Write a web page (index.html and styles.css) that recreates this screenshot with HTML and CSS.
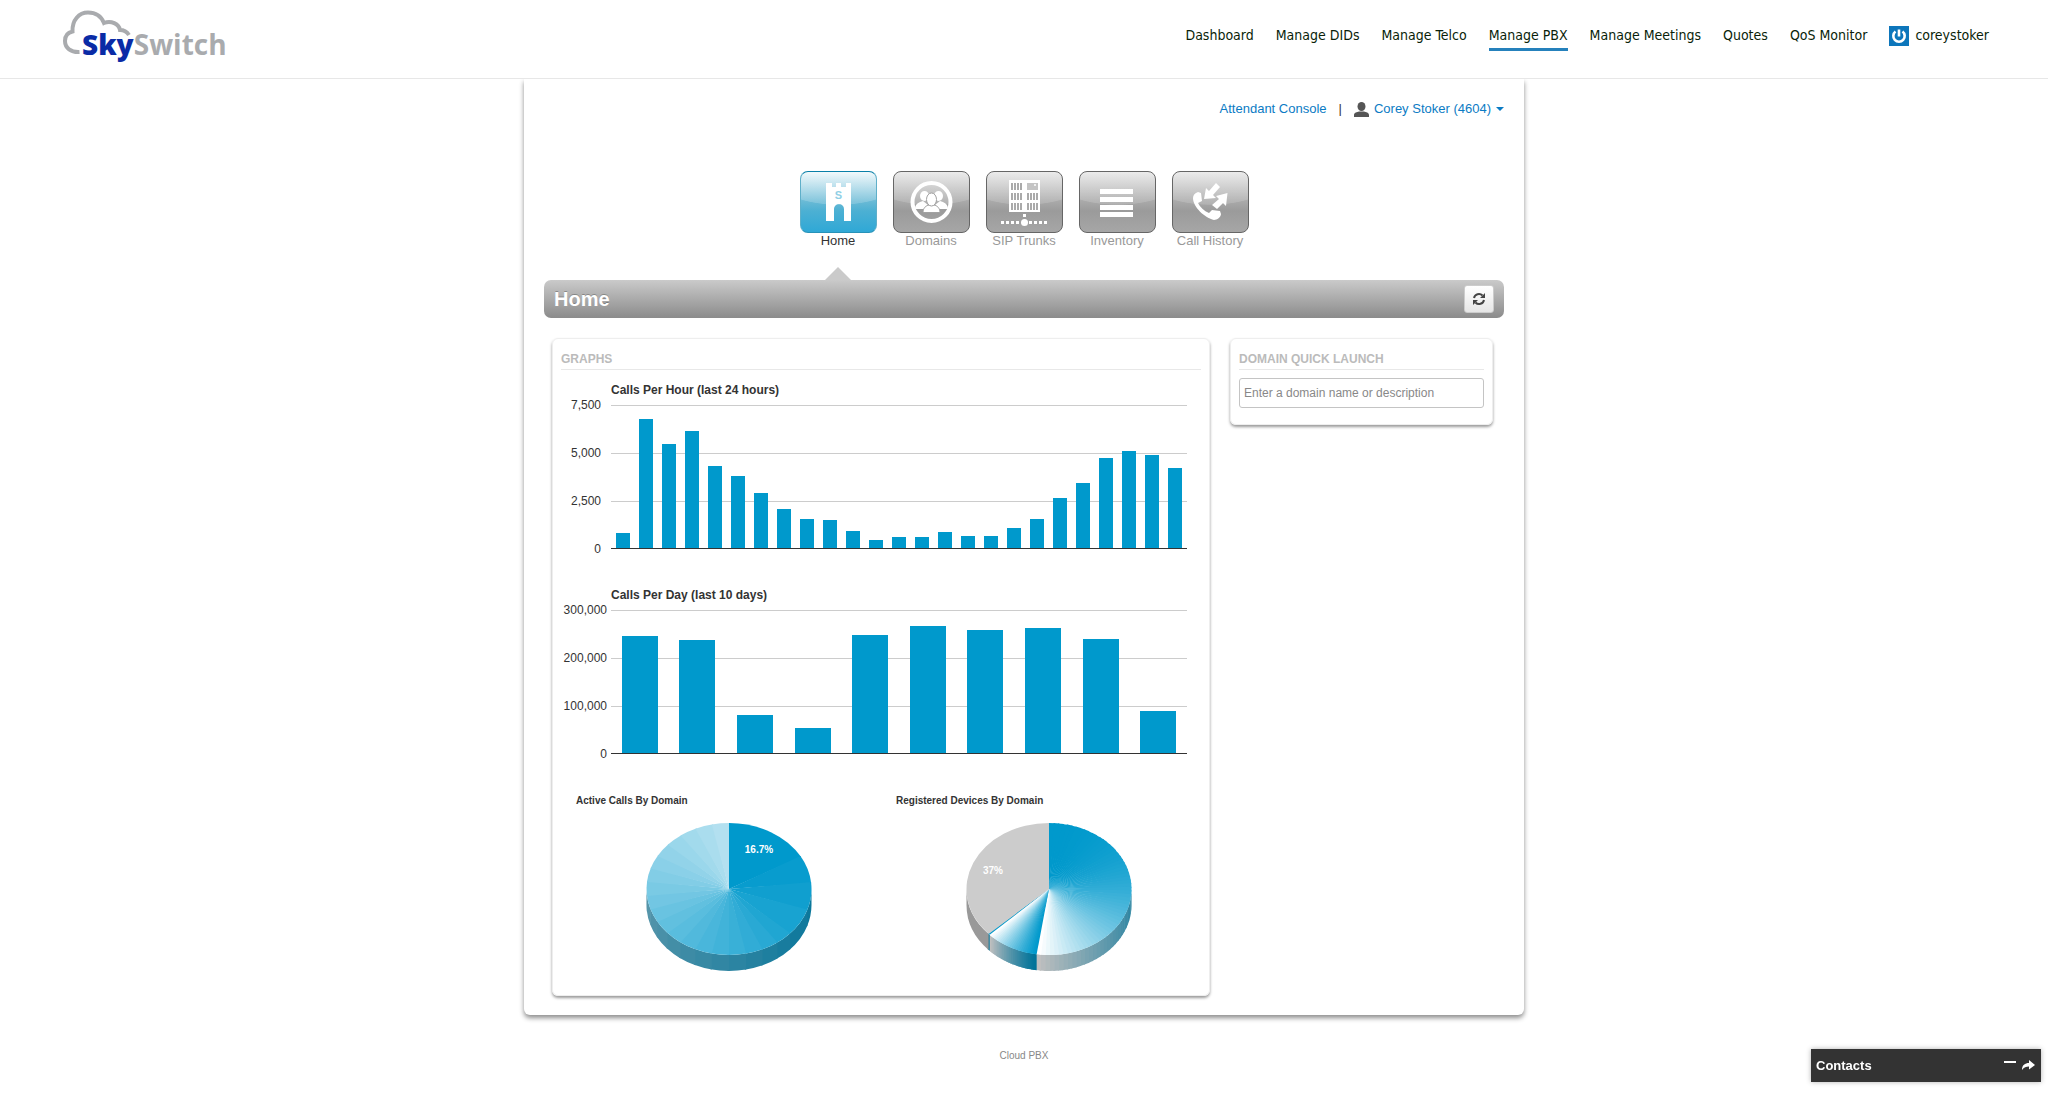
FILE: index.html
```html
<!DOCTYPE html>
<html lang="en">
<head>
    <meta charset="UTF-8">
    <meta name="viewport" content="width=device-width, initial-scale=1.0">
    <title>SkySwitch - Manage PBX</title>
    <link rel="stylesheet" href="styles.css">
</head>
<body>
    <header class="topbar">
        <a href="#" class="logo" aria-label="SkySwitch">
            <svg width="170" height="56" viewBox="20 8 170 56">
                <path class="cloud" d="M39.5 52C31 52.5 25 48 25 41C25 36 28 32.500 32.500 31.500C32 20 39 12.500 48 12.500C56 12.500 61.500 17 64 23C71 20 79 24 80 30C84 30 87 32 89 35"/>
                <text x="42" y="55"><tspan class="logo-sky">Sky</tspan><tspan class="logo-switch">Switch</tspan></text>
            </svg>
        </a>
        <nav class="main-nav">
            <a href="#">Dashboard</a>
            <a href="#">Manage DIDs</a>
            <a href="#">Manage Telco</a>
            <a href="#" class="active">Manage PBX</a>
            <a href="#">Manage Meetings</a>
            <a href="#">Quotes</a>
            <a href="#">QoS Monitor</a>
            <a href="#" class="account">
                <svg width="20" height="20" viewBox="0 0 20 20">
                    <rect width="20" height="20" fill="#0d76bb"/>
                    <path d="M6.500 5.500A5.700 5.700 0 1 0 13.500 5.500M10 3.500V10.500" fill="none" stroke="#fff" stroke-width="2.600"/>
                </svg>
                coreystoker
            </a>
        </nav>
    </header>

    <main class="container">
        <div class="user-bar">
            <a href="#">Attendant Console</a>
            <span class="divider">|</span>
            <a href="#" class="user-menu">
                <svg width="15" height="15" viewBox="0 0 15 15">
                    <ellipse cx="7.500" cy="4.500" rx="4" ry="4.500" fill="#555"/>
                    <path d="M0 15V13C0 10.500 3 10 5 9.500H10C12 10 15 10.500 15 13V15Z" fill="#555"/>
                </svg>
                Corey Stoker (4604)
                <span class="caret"></span>
            </a>
        </div>

        <nav class="icon-nav">
            <a href="#" class="current">
                <span class="tile">
                    <svg width="75" height="60" viewBox="1 1 75 60">
                        <path d="M26 12H32V16H36V12H41V16H46V12H51V50H44V38A5 5 0 0 0 34 38V50H26Z" fill="#fff"/>
                        <text x="38.500" y="28" class="castle-letter">S</text>
                    </svg>
                </span>
                Home
            </a>
            <a href="#">
                <span class="tile">
                    <svg width="75" height="60" viewBox="1 1 75 60">
                        <circle cx="38.500" cy="31" r="19" fill="none" stroke="#fff" stroke-width="4"/>
                        <g fill="#fff">
                            <ellipse cx="31.500" cy="25" rx="4.500" ry="5"/>
                            <ellipse cx="45.500" cy="25" rx="4.500" ry="5"/>
                            <path d="M22 38C22 33 26 31 30 30L35 34L31 38ZM55 38C55 33 51 31 47 30L42 34L46 38Z"/>
                        </g>
                        <g fill="#fff" stroke="#a2a2a2" stroke-width="1">
                            <path d="M30 41.500C30 37 33 34.500 36 34H41C44 34.500 47 37 47 41.500Z"/>
                            <ellipse cx="38.500" cy="28.500" rx="5" ry="6.500"/>
                        </g>
                    </svg>
                </span>
                Domains
            </a>
            <a href="#">
                <span class="tile">
                    <svg width="75" height="60" viewBox="1 1 75 60">
                        <rect x="23" y="9" width="31" height="32" fill="#fff"/>
                        <path d="M25 15.500H36M25 25.500H36M25 35.500H36M41 25.500H52M41 35.500H52" stroke="#aaa" stroke-width="7" stroke-dasharray="2 1"/>
                        <rect x="41" y="12" width="11" height="7" fill="#c4c4c4"/>
                        <circle cx="49" cy="14" r="1" fill="#fff"/>
                        <rect x="37" y="43" width="3" height="3" fill="#fff"/>
                        <path d="M15 51.500H34M43 51.500H62" stroke="#fff" stroke-width="3" stroke-dasharray="3 2"/>
                        <circle cx="38.500" cy="51.500" r="3.500" fill="#fff"/>
                    </svg>
                </span>
                SIP Trunks
            </a>
            <a href="#">
                <span class="tile">
                    <svg width="75" height="60" viewBox="1 1 75 60">
                        <path d="M21 20.500H54M21 28.500H54M21 36.500H54M21 43.500H54" stroke="#fff" stroke-width="5"/>
                    </svg>
                </span>
                Inventory
            </a>
            <a href="#">
                <span class="tile">
                    <svg width="75" height="60" viewBox="1 1 75 60">
                        <g fill="#fff">
                            <path d="M26 21L29 22L30 30L26 32C28 36 32 40 37 42L40 39L48 40L49 43C49 46 45 49 42 49C33 47 21 36 21 27C21 24 23 22 26 21Z"/>
                            <path d="M32 28L34 17L37 20L44 12L48 16L41 24L44 27Z"/>
                            <path d="M55.500 22L44 25L47 28L40 34L45 38L51 32L54 35Z"/>
                        </g>
                    </svg>
                </span>
                Call History
            </a>
        </nav>

        <div class="title-bar">
            <h1>Home</h1>
            <button type="button" class="refresh" aria-label="Refresh">
                <svg width="14" height="14" viewBox="0 0 14 14">
                    <path d="M2 6A5 5 0 0 1 10.500 3.500M12 8A5 5 0 0 1 3.500 10.500" fill="none" stroke="#444" stroke-width="2"/>
                    <path d="M13 1V6H8ZM1 13V8H6Z" fill="#444"/>
                </svg>
            </button>
        </div>

        <div class="columns">
            <section class="panel">
                <h2>Graphs</h2>

                <div class="chart hours">
                    <h3>Calls Per Hour (last 24 hours)</h3>
                    <div class="axis"><span>7,500</span><span>5,000</span><span>2,500</span><span>0</span></div>
                    <div class="plot">
                        <div class="bar" style="height: 10.5%"></div>
                        <div class="bar" style="height: 90.5%"></div>
                        <div class="bar" style="height: 73%"></div>
                        <div class="bar" style="height: 82%"></div>
                        <div class="bar" style="height: 57.5%"></div>
                        <div class="bar" style="height: 50.5%"></div>
                        <div class="bar" style="height: 38.5%"></div>
                        <div class="bar" style="height: 27.5%"></div>
                        <div class="bar" style="height: 20.5%"></div>
                        <div class="bar" style="height: 19.8%"></div>
                        <div class="bar" style="height: 12%"></div>
                        <div class="bar" style="height: 5.7%"></div>
                        <div class="bar" style="height: 7.8%"></div>
                        <div class="bar" style="height: 7.8%"></div>
                        <div class="bar" style="height: 11.3%"></div>
                        <div class="bar" style="height: 8.5%"></div>
                        <div class="bar" style="height: 8.5%"></div>
                        <div class="bar" style="height: 14%"></div>
                        <div class="bar" style="height: 20.5%"></div>
                        <div class="bar" style="height: 35%"></div>
                        <div class="bar" style="height: 45.6%"></div>
                        <div class="bar" style="height: 63%"></div>
                        <div class="bar" style="height: 68%"></div>
                        <div class="bar" style="height: 65.2%"></div>
                        <div class="bar" style="height: 56.1%"></div>
                    </div>
                </div>

                <div class="chart days">
                    <h3>Calls Per Day (last 10 days)</h3>
                    <div class="axis"><span>300,000</span><span>200,000</span><span>100,000</span><span>0</span></div>
                    <div class="plot">
                        <div class="bar" style="height: 82%"></div>
                        <div class="bar" style="height: 79.2%"></div>
                        <div class="bar" style="height: 26.8%"></div>
                        <div class="bar" style="height: 17.7%"></div>
                        <div class="bar" style="height: 82.7%"></div>
                        <div class="bar" style="height: 89%"></div>
                        <div class="bar" style="height: 86.2%"></div>
                        <div class="bar" style="height: 87.6%"></div>
                        <div class="bar" style="height: 80%"></div>
                        <div class="bar" style="height: 29.6%"></div>
                    </div>
                </div>

                <div class="pies">
                    <div class="pie">
                        <h3>Active Calls By Domain</h3>
                        <svg id="activePie" width="168" height="152" viewBox="-84 -67 168 152"></svg>
                    </div>
                    <div class="pie">
                        <h3>Registered Devices By Domain</h3>
                        <svg id="devicePie" width="168" height="152" viewBox="-84 -67 168 152"></svg>
                    </div>
                </div>
            </section>

            <aside class="panel">
                <h2><label for="domain">Domain Quick Launch</label></h2>
                <input type="text" id="domain" placeholder="Enter a domain name or description">
            </aside>
        </div>
    </main>

    <footer class="footer">Cloud PBX</footer>

    <div class="contacts">
        <span>Contacts</span>
        <button type="button" aria-label="Minimize"><span class="minimize"></span></button>
        <button type="button" aria-label="Pop out">
            <svg width="13" height="11" viewBox="0 0 13 11">
                <path d="M0 10C0 5 3 3 7 3V0L13 5L7 9.500V6.500C4 6.500 2 7 0 10Z" fill="#fff"/>
            </svg>
        </button>
    </div>

    <script src="script.js"></script>
</body>
</html>
```
FILE: styles.css
```css
* {
    box-sizing: border-box;
}
body {
    margin: 0;
    font-family: "Liberation Sans", Arial, sans-serif;
    font-size: 13px;
    line-height: 18px;
    background-color: #fff;
    color: #333;
}
a {
    color: #0b7bc4;
    text-decoration: none;
}
h1, h2, h3 {
    margin: 0;
}

/* top navigation */
.topbar {
    display: flex;
    justify-content: space-between;
    align-items: flex-start;
    height: 79px;
    padding: 8px 59px 0 60px;
    border-bottom: 1px solid #e7e7e7;
}
.logo svg {
    display: block;
}
.logo text {
    font-family: "Open Sans", sans-serif;
    font-size: 28px;
}
.cloud {
    fill: none;
    stroke: #a9abae;
    stroke-width: 4;
}
.logo-sky {
    fill: #0a2ba6;
    font-weight: 800;
}
.logo-switch {
    fill: #a9abae;
    font-weight: 700;
}
.main-nav {
    display: flex;
    gap: 22px;
    padding-top: 16px;
    font-family: "DejaVu Sans Condensed", "DejaVu Sans", sans-serif;
    font-size: 14px;
}
.main-nav a {
    height: 27px;
    line-height: 23px;
    color: #0a1f0a;
}
.main-nav .active {
    border-bottom: 3px solid #2581bc;
}
.main-nav .account {
    display: flex;
    gap: 6px;
}
.account svg {
    margin-top: 2px;
}

/* page body */
.container {
    max-width: 1000px;
    margin: 0 auto;
    padding: 20px 20px 19px;
    border-radius: 0 0 6px 6px;
    box-shadow: 0 3px 5px rgba(0, 0, 0, 0.45);
    clip-path: inset(0 -12px -12px -12px);
}
.user-bar {
    display: flex;
    justify-content: flex-end;
    align-items: center;
    gap: 12px;
    height: 20px;
}
.user-menu {
    display: flex;
    align-items: center;
    gap: 5px;
}
.caret {
    border: 4px solid transparent;
    border-top-color: #0b7bc4;
    border-bottom: 0;
}
.icon-nav {
    display: flex;
    justify-content: center;
    gap: 16px;
    margin-top: 52px;
}
.icon-nav a {
    width: 77px;
    text-align: center;
    line-height: 16px;
    white-space: nowrap;
    color: #999;
}
.tile {
    display: block;
    height: 62px;
    border: 1px solid #666;
    border-radius: 8px;
    background: radial-gradient(ellipse 70px 33px at 50% 0, rgba(255, 255, 255, 0.15) 98%, transparent 100%),
        linear-gradient(#e8e8e8, #a8a8a8 50%, #9b9b9b 65%, #a6a6a6);
}
.tile svg {
    display: block;
}
.icon-nav .current {
    color: #333;
}
.current .tile {
    border-color: #0a80a8 #5fafc9 #2792b8;
    background: radial-gradient(ellipse 70px 33px at 50% 0, rgba(255, 255, 255, 0.18) 98%, transparent 100%),
        linear-gradient(#eff8fb, #67b9d5 50%, #4cb0d3 65%, #2fa8d6);
}
.castle-letter {
    font-size: 11px;
    font-weight: bold;
    fill: #8fcfe5;
    text-anchor: middle;
}
.title-bar {
    position: relative;
    display: flex;
    justify-content: space-between;
    align-items: center;
    height: 38px;
    margin-top: 31px;
    padding: 0 10px;
    border-radius: 7px;
    background: linear-gradient(#cacaca, #8b8b8b);
}
/* pointer under the current icon */
.title-bar::before {
    content: "";
    position: absolute;
    bottom: 100%;
    left: 281px;
    border: 13px solid transparent;
    border-top: 0;
    border-bottom-color: #cacaca;
}
.title-bar h1 {
    font-size: 20px;
    line-height: 24px;
    color: #fff;
    text-shadow: 0 -1px 0 rgba(0, 0, 0, 0.25);
}
.refresh {
    display: flex;
    align-items: center;
    justify-content: center;
    width: 30px;
    height: 28px;
    padding: 0;
    border: 1px solid #ccc;
    border-radius: 3px;
    background: linear-gradient(#fff, #e6e6e6);
}

/* panels */
.columns {
    display: grid;
    grid-template-columns: 1fr 263px;
    align-items: start;
    gap: 20px;
    margin: 20px 13px 0 8px;
}
.panel {
    padding: 11px 8px;
    border: 1px solid #eee;
    border-radius: 6px;
    box-shadow: 0 2px 3px rgba(0, 0, 0, 0.4);
}
.panel h2 {
    padding-bottom: 1px;
    border-bottom: 1px solid #e8e8e8;
    font-size: 12px;
    text-transform: uppercase;
    color: #bbb;
}
.panel input {
    display: block;
    width: 245px;
    height: 30px;
    margin-top: 8px;
    margin-bottom: 5px;
    padding: 0 4px;
    border: 1px solid #c4c4c4;
    border-radius: 3px;
    font: inherit;
    font-size: 12px;
}
.panel input::placeholder {
    color: #888;
    opacity: 1;
}

/* bar charts */
.chart {
    display: grid;
    grid-template-columns: 50px 1fr;
    padding-right: 14px;
    font-size: 12px;
}
.chart h3 {
    grid-column: 2;
    margin-bottom: 6px;
    font-size: 12px;
    line-height: 18px;
}
.hours {
    margin-top: 11px;
}
.days {
    margin-top: 37px;
}
.axis {
    display: flex;
    flex-direction: column;
    justify-content: space-between;
    margin: -8px 4px -8px 0;
    text-align: right;
    line-height: 16px;
}
.hours .axis {
    margin-right: 10px;
}
.plot {
    display: flex;
    align-items: flex-end;
    justify-content: space-around;
    height: 144px;
    border-bottom: 1px solid #333;
    background: linear-gradient(#ccc 1px, transparent 1px) 0 0 / 100% 48px;
}
.bar {
    background-color: #0099cc;
}
.hours .bar {
    width: 14px;
}
.days .bar {
    width: 36px;
}

/* pie charts */
.pies {
    display: grid;
    grid-template-columns: 320px 320px;
    margin-top: 38px;
    padding-bottom: 10px;
}
.pie h3 {
    padding-left: 15px;
    font-size: 10px;
    line-height: 18px;
}
.pie svg {
    display: block;
    margin: 12px auto 0 84px;
}
.pie text {
    fill: #fff;
    font-size: 10px;
    font-weight: bold;
    text-anchor: middle;
}

.footer {
    margin-top: 32px;
    text-align: center;
    font-size: 10px;
    color: #888;
}

/* docked contacts box */
.contacts {
    position: fixed;
    right: 7px;
    bottom: 14px;
    display: flex;
    align-items: center;
    gap: 6px;
    width: 230px;
    height: 33px;
    padding: 0 6px 0 5px;
    background-color: #333;
    box-shadow: 0 0 5px rgba(0, 0, 0, 0.3);
    color: #fff;
    font-weight: bold;
}
.contacts > span {
    flex: 1;
}
.contacts button {
    display: flex;
    padding: 0;
    border: 0;
    background: none;
}
.minimize {
    width: 12px;
    height: 10px;
    border-top: 2px solid #fff;
}
```
FILE: script.js
```js
const RX = 82.5;
const RY = 66;
const DEPTH = 16;

function point(deg) {
    const a = deg * Math.PI / 180;
    return [RX * Math.sin(a), -RY * Math.cos(a)];
}

// mix from the base blue towards white
function shade(t) {
    return [255 * t, 153 + 102 * t, 204 + 51 * t];
}

function css(rgb, k) {
    return 'rgb(' + rgb.map(v => Math.round(v * k)).join(',') + ')';
}

function drawPie(id, slices, label, x, y) {
    let sides = '';
    let tops = '';
    slices.forEach(s => {
        // run a little under the next slice so no seam shows
        const end = Math.min(s.to + 1, 360);
        const [x1, y1] = point(s.from);
        const [x2, y2] = point(end);
        tops += `<path d="M0 0L${x1} ${y1}A${RX} ${RY} 0 0 1 ${x2} ${y2}Z" fill="${css(s.color, 1)}"/>`;

        // only the front half shows its edge
        const a = Math.max(s.from, 90);
        const b = Math.min(end, 270);
        if (a < b) {
            const [ax, ay] = point(a);
            const [bx, by] = point(b);
            sides += `<path d="M${ax} ${ay}A${RX} ${RY} 0 0 1 ${bx} ${by}V${by + DEPTH}A${RX} ${RY} 0 0 0 ${ax} ${ay + DEPTH}Z" fill="${css(s.color, 0.75)}"/>`;
        }
    });
    document.getElementById(id).innerHTML = sides + tops + `<text x="${x}" y="${y}">${label}</text>`;
}

// active calls: one 60 degree slice, three of 24, the rest 12 each
const stops = [0, 60, 84, 108];
for (let d = 132; d <= 360; d += 12) {
    stops.push(d);
}
const active = [];
for (let i = 0; i < stops.length - 1; i++) {
    active.push({ from: stops[i], to: stops[i + 1], color: shade(0.7 * i / (stops.length - 2)) });
}
drawPie('activePie', active, '16.7%', 30, -36);

// registered devices: many small domains, then everything else in grey
const devices = [];
function fade(from, to, steps, power) {
    const w = (to - from) / steps;
    for (let i = 0; i < steps; i++) {
        devices.push({ from: from + i * w, to: from + (i + 1) * w, color: shade(Math.pow(i / (steps - 1), power)) });
    }
}
fade(0, 188.6, 60, 2.2);
fade(188.6, 226, 26, 1.2);
devices.push({ from: 226, to: 227, color: shade(0) });
devices.push({ from: 227, to: 360, color: [204, 204, 204] });
drawPie('devicePie', devices, '37%', -56, -15);
```
